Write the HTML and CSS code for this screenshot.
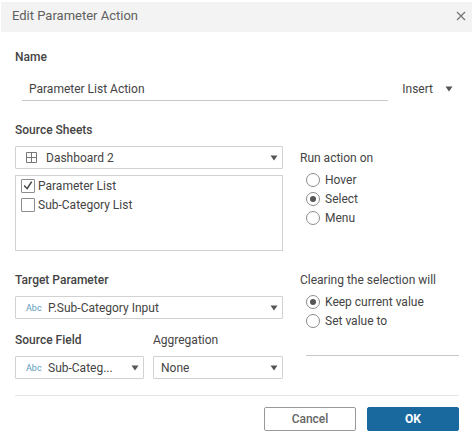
FILE: index.html
```html
<!DOCTYPE html>
<html lang="en">
<head>
<meta charset="utf-8">
<meta name="viewport" content="width=device-width, initial-scale=1">
<title>Edit Parameter Action</title>
<link rel="stylesheet" href="styles.css">
</head>
<body>
<form class="dialog">
  <header class="titlebar">
    <h1 class="title">Edit Parameter Action</h1>
    <button class="close" type="button" aria-label="Close">
      <svg width="10" height="10" viewBox="0 0 10 10"><path d="M1 1l8 8M9 1l-8 8" fill="none" stroke="#707070" stroke-width="1.1"/></svg>
    </button>
  </header>

  <main class="content">
    <section class="name-section">
      <label class="label strong" for="name">Name</label>
      <div class="name-row">
        <input class="line-input" id="name" type="text" value="Parameter List Action">
        <button class="insert" type="button">Insert
          <svg width="8" height="6" viewBox="0 0 8 6"><path d="M0.5 0.5h7L4 5.5z" fill="#555"/></svg>
        </button>
      </div>
    </section>

    <section class="columns sources">
      <div>
        <label class="label strong" for="sheet">Source Sheets</label>
        <div class="select with-icon">
          <svg class="lead" width="11" height="11" viewBox="0 0 11 11"><path d="M0.5 0.5h10v10h-10zM5.5 0.5v10M0.5 5.5h10" fill="none" stroke="#777"/></svg>
          <select id="sheet"><option>Dashboard 2</option></select>
          <svg class="arrow" width="8" height="6" viewBox="0 0 8 6"><path d="M0.5 0.5h7L4 5.5z" fill="#555"/></svg>
        </div>
        <div class="sheet-list">
          <label class="choice"><input type="checkbox" checked>Parameter List</label>
          <label class="choice"><input type="checkbox">Sub-Category List</label>
        </div>
      </div>
      <div class="run-on" role="radiogroup" aria-labelledby="run-label">
        <div class="label" id="run-label">Run action on</div>
        <div class="options">
          <label class="choice"><input type="radio" name="run">Hover</label>
          <label class="choice"><input type="radio" name="run" checked>Select</label>
          <label class="choice"><input type="radio" name="run">Menu</label>
        </div>
      </div>
    </section>

    <section class="columns target">
      <div>
        <label class="label strong" for="param">Target Parameter</label>
        <div class="select with-type">
          <span class="lead type">Abc</span>
          <select id="param"><option>P.Sub-Category Input</option></select>
          <svg class="arrow" width="8" height="6" viewBox="0 0 8 6"><path d="M0.5 0.5h7L4 5.5z" fill="#555"/></svg>
        </div>
        <div class="fields">
          <div>
            <label class="label strong" for="field">Source Field</label>
            <div class="select with-type">
              <span class="lead type">Abc</span>
              <select id="field"><option>Sub-Categ...</option></select>
              <svg class="arrow" width="8" height="6" viewBox="0 0 8 6"><path d="M0.5 0.5h7L4 5.5z" fill="#555"/></svg>
            </div>
          </div>
          <div>
            <label class="label" for="agg">Aggregation</label>
            <div class="select">
              <select id="agg"><option>None</option></select>
              <svg class="arrow" width="8" height="6" viewBox="0 0 8 6"><path d="M0.5 0.5h7L4 5.5z" fill="#555"/></svg>
            </div>
          </div>
        </div>
      </div>
      <div role="radiogroup" aria-labelledby="clear-label">
        <div class="label" id="clear-label">Clearing the selection will</div>
        <div class="options">
          <label class="choice"><input type="radio" name="clear" checked>Keep current value</label>
          <label class="choice"><input type="radio" name="clear">Set value to</label>
          <input class="line-input" type="text" aria-label="Value to set">
        </div>
      </div>
    </section>

    <footer class="actions">
      <button class="btn" type="button">Cancel</button>
      <button class="btn primary" type="submit">OK</button>
    </footer>
  </main>
</form>
</body>
</html>
```
FILE: styles.css
```css
* {
  box-sizing: border-box;
}

body {
  margin: 0;
  background: #fff;
  color: #444;
  font: 12px/16px Roboto, "Liberation Sans", sans-serif;
}

button,
input,
select {
  margin: 0;
  color: inherit;
  font: inherit;
}

svg {
  display: block;
}

.dialog {
  padding: 2px 2px 0 1px;
}

.titlebar {
  display: flex;
  align-items: center;
  justify-content: space-between;
  height: 30px;
  padding: 0 4px 3px 11px;
  background: #f3f3f3;
}

.title {
  margin: 0;
  color: #606060;
  font-size: 13px;
  font-weight: 400;
}

.close {
  padding: 2px;
  border: 0;
  background: none;
}

.content {
  padding: 17px 13px 0 14px;
}

.label {
  display: block;
}

.strong {
  font-weight: 500;
}

.name-row {
  display: flex;
  gap: 14px;
  margin: 12px 6px 0 7px;
}

.line-input {
  flex: 1;
  min-width: 0;
  height: 24px;
  padding: 0 7px;
  border: 0;
  border-bottom: 1px solid #c8c8c8;
  background: none;
}

.insert {
  display: flex;
  align-items: center;
  gap: 12px;
  height: 24px;
  padding: 0;
  border: 0;
  background: none;
}

.columns {
  display: grid;
  grid-template-columns: 268fr 159fr;
  gap: 17px;
}

.sources {
  margin-top: 21px;
}

.target {
  margin-top: 21px;
}

.select {
  position: relative;
  margin-top: 8px;
}

.select select {
  display: block;
  width: 100%;
  height: 23px;
  padding: 0 16px 0 7px;
  border: 1px solid #d2d2d2;
  border-radius: 1px;
  background: #fff;
  appearance: none;
}

.with-icon select {
  padding-left: 30px;
}

.with-type select {
  padding-left: 32px;
}

.lead,
.arrow {
  position: absolute;
  top: 0;
  bottom: 0;
  margin: auto 0;
  pointer-events: none;
}

.lead {
  left: 11px;
}

.arrow {
  right: 5px;
}

.type {
  height: 16px;
  color: #5b9bbd;
  font-size: 9px;
}

.sheet-list {
  height: 76px;
  margin-top: 6px;
  padding: 0 5px;
  border: 1px solid #d2d2d2;
}

.choice {
  display: flex;
  align-items: center;
  gap: 5px;
  height: 19px;
}

.sheet-list .choice {
  gap: 3px;
}

.choice input {
  display: grid;
  place-items: center;
  width: 14px;
  height: 14px;
  border: 1px solid #8c8c8c;
  border-radius: 1px;
  background: #fff;
  appearance: none;
}

.choice input[type="radio"] {
  border-radius: 50%;
}

.choice input[type="radio"]:checked::before {
  width: 6px;
  height: 6px;
  border-radius: 50%;
  background: #555;
  content: "";
}

.choice input[type="checkbox"]:checked::before {
  width: 9px;
  height: 9px;
  background: #444;
  clip-path: polygon(0 55%, 12% 44%, 38% 72%, 84% 2%, 98% 12%, 42% 98%);
  content: "";
}

.run-on {
  padding-top: 28px;
}

.options {
  padding: 4px 0 0 6px;
}

.options .line-input {
  display: block;
  width: 100%;
  margin-top: 2px;
}

.fields {
  display: grid;
  grid-template-columns: 129fr 130fr;
  gap: 9px;
  margin-top: 13px;
}

.actions {
  display: flex;
  justify-content: flex-end;
  gap: 11px;
  margin-top: 16px;
  padding-top: 11px;
  border-top: 1px solid #e4e4e4;
}

.btn {
  width: 92px;
  height: 24px;
  padding: 0;
  border: 1px solid #999;
  border-radius: 2px;
  background: #fff;
  color: #666;
  font-weight: 500;
}

.primary {
  border-color: #19699f;
  background: #19699f;
  color: #fff;
  font-weight: 700;
}
```
